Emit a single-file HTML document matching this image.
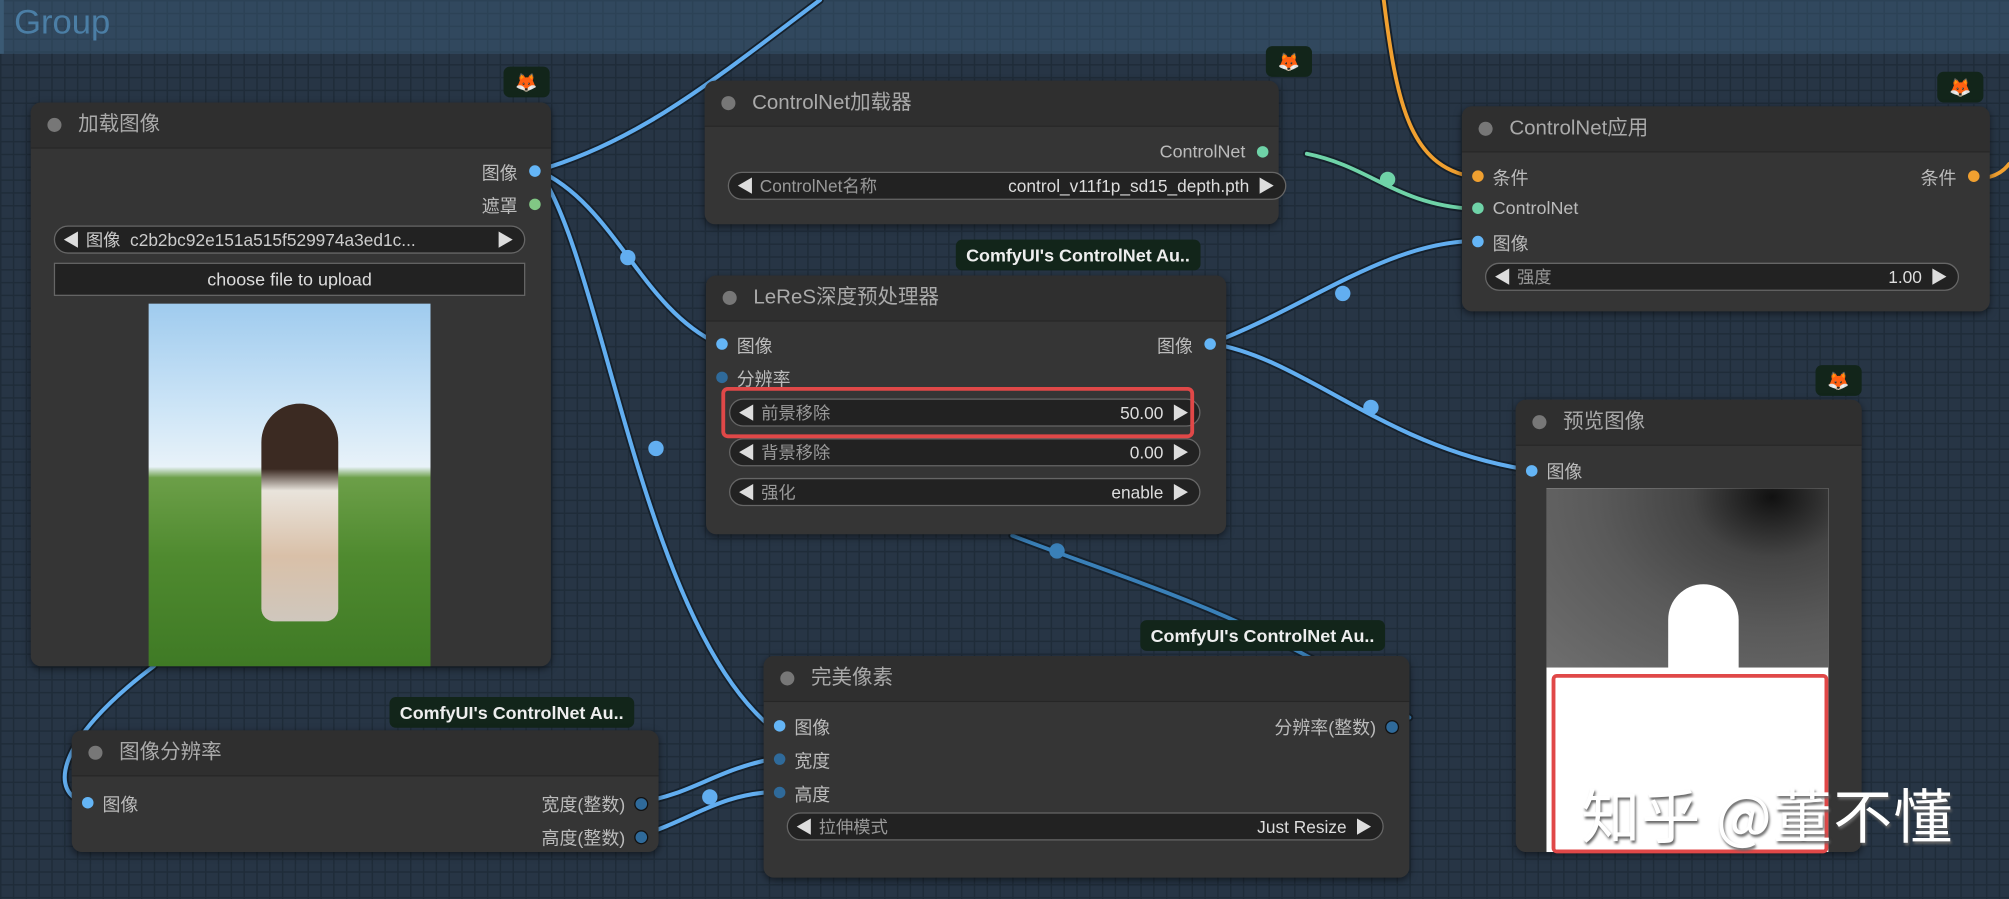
<!DOCTYPE html>
<html><head><meta charset="utf-8"><style>
html,body{margin:0;padding:0;width:2009px;height:899px;overflow:hidden;background:#263443}
#c{position:absolute;left:0;top:0;width:1568px;height:702px;transform:scale(1.28125);transform-origin:0 0;font-family:"Liberation Sans","Noto Sans CJK SC",sans-serif;
background-color:#273545;background-image:linear-gradient(#1f2c39 1px,transparent 1px),linear-gradient(90deg,#1f2c39 1px,transparent 1px);background-size:10px 10px}
.grp{position:absolute;left:0;top:0;width:1568px;height:42px;background:rgba(70,110,140,.35);border-left:3px solid #3b5a74}
.grp span{position:absolute;left:8px;top:2px;font-size:27px;color:#4b7ea5}
.node{position:absolute;background:#353535;border-radius:8px;box-shadow:0 2px 6px rgba(0,0,0,.5)}
.tt{height:35px;background:#2f2f2f;border-radius:8px 8px 0 0;border-bottom:1px solid #262626;color:#aaa;font-size:16px;line-height:35px;padding-left:37px;position:relative}
.tt:before{content:"";position:absolute;left:13px;top:12px;width:11px;height:11px;border-radius:50%;background:#777}
.lab{position:absolute;font-size:14px;color:#bbb;white-space:nowrap}
.dot{position:absolute;width:9px;height:9px;border-radius:50%}
.w{position:absolute;height:22px;border:1px solid #666;border-radius:12px;background:#222;color:#ccc;font-size:13.5px;line-height:21px;box-sizing:border-box}
.w .l{position:absolute;left:6px;color:#ddd}.w .r{position:absolute;right:8px;color:#ddd}
.w .n{position:absolute;left:24px;color:#999}.w .v{position:absolute;right:28px;color:#ddd}
.badge{position:absolute;height:24px;background:#12251a;border-radius:5px;color:#eee;font-size:14px;font-weight:bold;line-height:24px;padding:0 8px;white-space:nowrap}
.fox{position:absolute;width:36px;height:24px;background:#12251a;border-radius:5px;text-align:center;font-size:14px;line-height:24px}
</style></head><body><div id="c">
<div class="grp"><span>Group</span></div>
<svg width="1568" height="702" style="position:absolute;left:0;top:0" fill="none" stroke-linecap="round">
<g stroke="#15202b" stroke-width="6">
<path d="M420 133 C500 110 560 60 640 0"/>
<path d="M420 133 C480 160 500 240 560 268"/>
<path d="M420 133 C470 200 500 480 600 566"/>
<path d="M420 155 C440 190 350 230 120 520 C40 580 40 620 66 626"/>
<path d="M945 268 C1020 240 1080 190 1150 188"/>
<path d="M945 268 C1020 280 1080 350 1195 367"/>
<path d="M790 418 C900 460 980 480 1100 560"/>
<path d="M500 626 C540 620 560 600 605 592"/>
<path d="M500 652 C540 640 560 620 605 618"/>
<path d="M1080 0 C1090 80 1100 130 1150 138"/>
<path d="M1020 120 C1070 130 1090 160 1150 163"/>
</g>
<g stroke="#62aef0" stroke-width="3.2">
<path d="M420 133 C500 110 560 60 640 0"/>
<path d="M420 133 C480 160 500 240 560 268"/>
<path d="M420 133 C470 200 500 480 600 566"/>
<path d="M420 155 C440 190 350 230 120 520 C40 580 40 620 66 626"/>
<path d="M945 268 C1020 240 1080 190 1150 188"/>
<path d="M945 268 C1020 280 1080 350 1195 367"/>
<path d="M500 626 C540 620 560 600 605 592"/>
<path d="M500 652 C540 640 560 620 605 618"/>
</g>
<path d="M790 418 C900 460 980 480 1100 560" stroke="#3a80b8" stroke-width="3"/>
<path d="M1080 0 C1090 80 1100 130 1150 138" stroke="#f0a030" stroke-width="3"/>
<path d="M1553 138 C1560 136 1565 132 1568 128" stroke="#f0a030" stroke-width="3"/>
<path d="M1020 120 C1070 130 1090 160 1150 163" stroke="#6fd3a8" stroke-width="3"/>
<g fill="#62aef0"><circle cx="490" cy="201" r="6"/><circle cx="512" cy="350" r="6"/><circle cx="1048" cy="229" r="6"/><circle cx="1070" cy="318" r="6"/><circle cx="554" cy="622" r="6"/><circle cx="825" cy="430" r="6" fill="#3a80b8"/></g>
<circle cx="1083" cy="140" r="6" fill="#6fd3a8"/>
</svg>

<div class="fox" style="left:393px;top:52px">🦊</div>
<div class="node" style="left:24px;top:80px;width:406px;height:440px">
<div class="tt">加载图像</div>
<div class="lab" style="right:26px;top:45px">图像</div><div class="dot" style="right:8px;top:49px;background:#64b5f6"></div>
<div class="lab" style="right:26px;top:71px">遮罩</div><div class="dot" style="right:8px;top:75px;background:#81c784"></div>
<div class="w" style="left:18px;top:96px;width:368px"><span class="l">◀</span><span class="n" style="color:#ccc">图像 &nbsp;c2b2bc92e151a515f529974a3ed1c...</span><span class="r">▶</span></div>
<div style="position:absolute;left:18px;top:125px;width:368px;height:26px;background:#222;border:1px solid #666;box-sizing:border-box;color:#ddd;font-size:14px;text-align:center;line-height:24px">choose file to upload</div>
<div style="position:absolute;left:92px;top:157px;width:220px;height:283px;background:linear-gradient(#9fcbee 0%,#cfe6f7 30%,#e8f2f9 45%,#6c9f48 48%,#4f8a2f 70%,#3f7a25 100%)">
<div style="position:absolute;left:88px;top:78px;width:60px;height:170px;background:linear-gradient(#3b2a22 0%,#3b2a22 30%,#e9e4dc 40%,#d9c0a8 70%,#cfc7bd 100%);border-radius:30px 30px 10px 10px"></div></div>
</div>

<div class="fox" style="left:988px;top:36px">🦊</div>
<div class="node" style="left:550px;top:63px;width:448px;height:112px">
<div class="tt">ControlNet加载器</div>
<div class="lab" style="right:26px;top:47px">ControlNet</div><div class="dot" style="right:8px;top:51px;background:#6fd3a8"></div>
<div class="w" style="left:18px;top:71px;width:436px"><span class="l">◀</span><span class="n">ControlNet名称</span><span class="v">control_v11f1p_sd15_depth.pth</span><span class="r">▶</span></div>
</div>

<div class="fox" style="left:1512px;top:56px">🦊</div>
<div class="node" style="left:1141px;top:83px;width:412px;height:160px">
<div class="tt">ControlNet应用</div>
<div class="dot" style="left:8px;top:50px;background:#f0a030"></div><div class="lab" style="left:24px;top:46px">条件</div>
<div class="lab" style="right:26px;top:46px">条件</div><div class="dot" style="right:8px;top:50px;background:#f0a030"></div>
<div class="dot" style="left:8px;top:75px;background:#6fd3a8"></div><div class="lab" style="left:24px;top:71px">ControlNet</div>
<div class="dot" style="left:8px;top:101px;background:#64b5f6"></div><div class="lab" style="left:24px;top:97px">图像</div>
<div class="w" style="left:18px;top:122px;width:370px"><span class="l">◀</span><span class="n">强度</span><span class="v">1.00</span><span class="r">▶</span></div>
</div>

<div class="badge" style="left:746px;top:187px">ComfyUI's ControlNet Au..</div>
<div class="node" style="left:551px;top:215px;width:406px;height:202px">
<div class="tt">LeReS深度预处理器</div>
<div class="dot" style="left:8px;top:49px;background:#64b5f6"></div><div class="lab" style="left:24px;top:45px">图像</div>
<div class="lab" style="right:26px;top:45px">图像</div><div class="dot" style="right:8px;top:49px;background:#64b5f6"></div>
<div class="dot" style="left:8px;top:75px;background:#2f6a9a"></div><div class="lab" style="left:24px;top:71px">分辨率</div>
<div class="w" style="left:18px;top:96px;width:368px"><span class="l">◀</span><span class="n">前景移除</span><span class="v">50.00</span><span class="r">▶</span></div>
<div class="w" style="left:18px;top:127px;width:368px"><span class="l">◀</span><span class="n">背景移除</span><span class="v">0.00</span><span class="r">▶</span></div>
<div class="w" style="left:18px;top:158px;width:368px"><span class="l">◀</span><span class="n">强化</span><span class="v">enable</span><span class="r">▶</span></div>
</div>
<div style="position:absolute;left:563px;top:302px;width:369px;height:40px;border:3px solid #e04848;border-radius:5px;box-sizing:border-box"></div>

<div class="fox" style="left:1417px;top:285px">🦊</div>
<div class="node" style="left:1183px;top:312px;width:270px;height:353px">
<div class="tt">预览图像</div>
<div class="dot" style="left:8px;top:51px;background:#64b5f6"></div><div class="lab" style="left:24px;top:46px">图像</div>
<div style="position:absolute;left:24px;top:69px;width:220px;height:284px;background:#fff;overflow:hidden">
<div style="position:absolute;left:0;top:0;width:220px;height:140px;background:radial-gradient(ellipse at 80% 5%,#111 0%,#444 25%,#5a5a5a 55%,#6e6e6e 100%)"></div>
<div style="position:absolute;left:95px;top:75px;width:55px;height:90px;background:#fff;border-radius:28px 28px 0 0"></div>
</div>
</div>
<div style="position:absolute;left:1211px;top:526px;width:216px;height:140px;border:3px solid #e04848;border-radius:4px;box-sizing:border-box"></div>
<div style="position:absolute;left:1234px;top:602px;font-size:46px;letter-spacing:1px;color:#fff;text-shadow:1px 2px 2px #666;font-family:'Noto Sans CJK SC',sans-serif;white-space:nowrap">知乎 @董不懂</div>

<div class="badge" style="left:890px;top:484px">ComfyUI's ControlNet Au..</div>
<div class="node" style="left:596px;top:512px;width:504px;height:173px">
<div class="tt">完美像素</div>
<div class="dot" style="left:8px;top:50px;background:#64b5f6"></div><div class="lab" style="left:24px;top:46px">图像</div>
<div class="lab" style="right:26px;top:46px">分辨率(整数)</div><div class="dot" style="right:8px;top:50px;background:#2f6a9a;border:1px solid #111"></div>
<div class="dot" style="left:8px;top:76px;background:#2f6a9a"></div><div class="lab" style="left:24px;top:72px">宽度</div>
<div class="dot" style="left:8px;top:102px;background:#2f6a9a"></div><div class="lab" style="left:24px;top:98px">高度</div>
<div class="w" style="left:18px;top:122px;width:466px"><span class="l">◀</span><span class="n">拉伸模式</span><span class="v">Just Resize</span><span class="r">▶</span></div>
</div>

<div class="badge" style="left:304px;top:544px">ComfyUI's ControlNet Au..</div>
<div class="node" style="left:56px;top:570px;width:458px;height:95px">
<div class="tt">图像分辨率</div>
<div class="dot" style="left:8px;top:52px;background:#64b5f6"></div><div class="lab" style="left:24px;top:48px">图像</div>
<div class="lab" style="right:26px;top:48px">宽度(整数)</div><div class="dot" style="right:8px;top:52px;background:#2f6a9a;border:1px solid #111"></div>
<div class="lab" style="right:26px;top:74px">高度(整数)</div><div class="dot" style="right:8px;top:78px;background:#2f6a9a;border:1px solid #111"></div>
</div>
</div></body></html>
